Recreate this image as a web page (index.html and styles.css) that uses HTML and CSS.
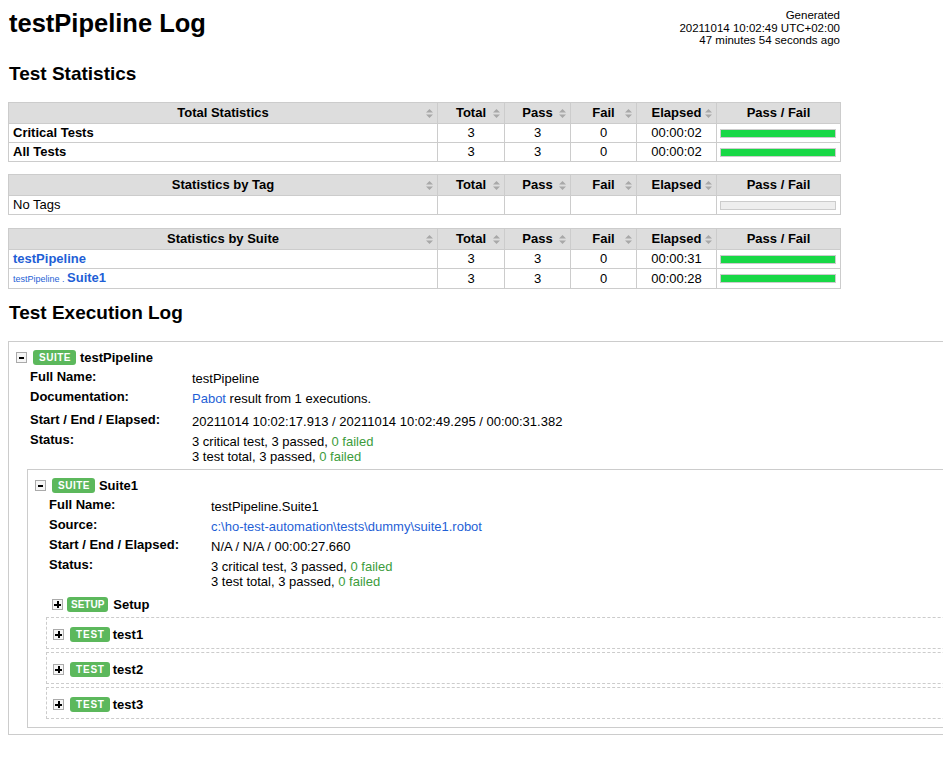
FILE: index.html
```html
<!DOCTYPE html>
<html>
<head>
<meta charset="utf-8">
<title>testPipeline Log</title>
<link rel="stylesheet" href="styles.css">
</head>
<body>
<header class="top">
  <h1 class="title">testPipeline Log</h1>
  <div class="generated">Generated<br>20211014 10:02:49 UTC+02:00<br>47 minutes 54 seconds ago</div>
</header>

<h2 class="section">Test Statistics</h2>

<table class="stats first">
  <colgroup><col class="c-name"><col class="c-num"><col class="c-num2"><col class="c-num2"><col class="c-el"><col class="c-bar"></colgroup>
  <thead>
    <tr>
      <th>Total Statistics<svg class="sorter" width="7" height="9" viewBox="0 0 7 9"><path d="M0 3.5 3.5 0 7 3.5Z M0 5.5 3.5 9 7 5.5Z"/></svg></th>
      <th>Total<svg class="sorter" width="7" height="9" viewBox="0 0 7 9"><path d="M0 3.5 3.5 0 7 3.5Z M0 5.5 3.5 9 7 5.5Z"/></svg></th>
      <th>Pass<svg class="sorter" width="7" height="9" viewBox="0 0 7 9"><path d="M0 3.5 3.5 0 7 3.5Z M0 5.5 3.5 9 7 5.5Z"/></svg></th>
      <th>Fail<svg class="sorter" width="7" height="9" viewBox="0 0 7 9"><path d="M0 3.5 3.5 0 7 3.5Z M0 5.5 3.5 9 7 5.5Z"/></svg></th>
      <th>Elapsed<svg class="sorter" width="7" height="9" viewBox="0 0 7 9"><path d="M0 3.5 3.5 0 7 3.5Z M0 5.5 3.5 9 7 5.5Z"/></svg></th>
      <th>Pass / Fail</th>
    </tr>
  </thead>
  <tbody>
    <tr><td class="stat-name strong">Critical Tests</td><td>3</td><td>3</td><td>0</td><td>00:00:02</td><td class="bar-cell"><div class="bar"><div class="bar-pass" style="width:100%"></div></div></td></tr>
    <tr><td class="stat-name strong">All Tests</td><td>3</td><td>3</td><td>0</td><td>00:00:02</td><td class="bar-cell"><div class="bar"><div class="bar-pass" style="width:100%"></div></div></td></tr>
  </tbody>
</table>

<table class="stats">
  <colgroup><col class="c-name"><col class="c-num"><col class="c-num2"><col class="c-num2"><col class="c-el"><col class="c-bar"></colgroup>
  <thead>
    <tr>
      <th>Statistics by Tag<svg class="sorter" width="7" height="9" viewBox="0 0 7 9"><path d="M0 3.5 3.5 0 7 3.5Z M0 5.5 3.5 9 7 5.5Z"/></svg></th>
      <th>Total<svg class="sorter" width="7" height="9" viewBox="0 0 7 9"><path d="M0 3.5 3.5 0 7 3.5Z M0 5.5 3.5 9 7 5.5Z"/></svg></th>
      <th>Pass<svg class="sorter" width="7" height="9" viewBox="0 0 7 9"><path d="M0 3.5 3.5 0 7 3.5Z M0 5.5 3.5 9 7 5.5Z"/></svg></th>
      <th>Fail<svg class="sorter" width="7" height="9" viewBox="0 0 7 9"><path d="M0 3.5 3.5 0 7 3.5Z M0 5.5 3.5 9 7 5.5Z"/></svg></th>
      <th>Elapsed<svg class="sorter" width="7" height="9" viewBox="0 0 7 9"><path d="M0 3.5 3.5 0 7 3.5Z M0 5.5 3.5 9 7 5.5Z"/></svg></th>
      <th>Pass / Fail</th>
    </tr>
  </thead>
  <tbody>
    <tr><td class="stat-name">No Tags</td><td></td><td></td><td></td><td></td><td class="bar-cell"><div class="bar"></div></td></tr>
  </tbody>
</table>

<table class="stats">
  <colgroup><col class="c-name"><col class="c-num"><col class="c-num2"><col class="c-num2"><col class="c-el"><col class="c-bar"></colgroup>
  <thead>
    <tr>
      <th>Statistics by Suite<svg class="sorter" width="7" height="9" viewBox="0 0 7 9"><path d="M0 3.5 3.5 0 7 3.5Z M0 5.5 3.5 9 7 5.5Z"/></svg></th>
      <th>Total<svg class="sorter" width="7" height="9" viewBox="0 0 7 9"><path d="M0 3.5 3.5 0 7 3.5Z M0 5.5 3.5 9 7 5.5Z"/></svg></th>
      <th>Pass<svg class="sorter" width="7" height="9" viewBox="0 0 7 9"><path d="M0 3.5 3.5 0 7 3.5Z M0 5.5 3.5 9 7 5.5Z"/></svg></th>
      <th>Fail<svg class="sorter" width="7" height="9" viewBox="0 0 7 9"><path d="M0 3.5 3.5 0 7 3.5Z M0 5.5 3.5 9 7 5.5Z"/></svg></th>
      <th>Elapsed<svg class="sorter" width="7" height="9" viewBox="0 0 7 9"><path d="M0 3.5 3.5 0 7 3.5Z M0 5.5 3.5 9 7 5.5Z"/></svg></th>
      <th>Pass / Fail</th>
    </tr>
  </thead>
  <tbody>
    <tr><td class="stat-name"><a class="suite-link" href="#s1">testPipeline</a></td><td>3</td><td>3</td><td>0</td><td>00:00:31</td><td class="bar-cell"><div class="bar"><div class="bar-pass" style="width:100%"></div></div></td></tr>
    <tr><td class="stat-name"><span class="parent-name">testPipeline . </span><a class="suite-link" href="#s1-s1">Suite1</a></td><td>3</td><td>3</td><td>0</td><td>00:00:28</td><td class="bar-cell"><div class="bar"><div class="bar-pass" style="width:100%"></div></div></td></tr>
  </tbody>
</table>

<h2 class="section exec">Test Execution Log</h2>

<div class="log">
  <div class="suite outer" id="s1">
    <div class="element-header">
      <span class="toggle"><svg width="9" height="9" viewBox="0 0 9 9"><rect x="2" y="4" width="5" height="2"/></svg></span>
      <span class="badge badge-suite">SUITE</span>
      <span class="name">testPipeline</span>
    </div>
    <table class="meta">
      <tr><th>Full Name:</th><td>testPipeline</td></tr>
      <tr><th>Documentation:</th><td class="doc"><a href="#">Pabot</a> result from 1 executions.</td></tr>
      <tr><th>Start / End / Elapsed:</th><td>20211014 10:02:17.913 / 20211014 10:02:49.295 / 00:00:31.382</td></tr>
      <tr><th>Status:</th><td>3 critical test, 3 passed, <span class="pass">0 failed</span><br>3 test total, 3 passed, <span class="pass">0 failed</span></td></tr>
    </table>
    <div class="children">
      <div class="suite inner" id="s1-s1">
        <div class="element-header">
          <span class="toggle"><svg width="9" height="9" viewBox="0 0 9 9"><rect x="2" y="4" width="5" height="2"/></svg></span>
          <span class="badge badge-suite">SUITE</span>
          <span class="name">Suite1</span>
        </div>
        <table class="meta">
          <tr><th>Full Name:</th><td>testPipeline.Suite1</td></tr>
          <tr><th>Source:</th><td><a href="#">c:\ho-test-automation\tests\dummy\suite1.robot</a></td></tr>
          <tr><th>Start / End / Elapsed:</th><td>N/A / N/A / 00:00:27.660</td></tr>
          <tr><th>Status:</th><td>3 critical test, 3 passed, <span class="pass">0 failed</span><br>3 test total, 3 passed, <span class="pass">0 failed</span></td></tr>
        </table>
        <div class="children">
          <div class="kw">
            <span class="toggle"><svg width="9" height="9" viewBox="0 0 9 9"><rect x="1" y="4" width="7" height="2"/><rect x="4" y="1" width="2" height="7"/></svg></span>
            <span class="badge badge-setup">SETUP</span>
            <span class="name kw-name">Setup</span>
          </div>
          <div class="test">
            <span class="toggle"><svg width="9" height="9" viewBox="0 0 9 9"><rect x="1" y="4" width="7" height="2"/><rect x="4" y="1" width="2" height="7"/></svg></span>
            <span class="badge badge-test">TEST</span>
            <span class="name test-name">test1</span>
          </div>
          <div class="test">
            <span class="toggle"><svg width="9" height="9" viewBox="0 0 9 9"><rect x="1" y="4" width="7" height="2"/><rect x="4" y="1" width="2" height="7"/></svg></span>
            <span class="badge badge-test">TEST</span>
            <span class="name test-name">test2</span>
          </div>
          <div class="test">
            <span class="toggle"><svg width="9" height="9" viewBox="0 0 9 9"><rect x="1" y="4" width="7" height="2"/><rect x="4" y="1" width="2" height="7"/></svg></span>
            <span class="badge badge-test">TEST</span>
            <span class="name test-name">test3</span>
          </div>
        </div>
      </div>
    </div>
  </div>
</div>
</body>
</html>
```

FILE: styles.css
```css
html {
  overflow-x: hidden;
}

body {
  margin: 0;
  padding: 0 0 0 8px;
  background: #fff;
  color: #000;
  font-family: "Liberation Sans", Arial, Helvetica, sans-serif;
  font-size: 13px;
}

a {
  color: #1f5fd6;
  text-decoration: none;
}

/* Header */
.top {
  display: flex;
  justify-content: space-between;
  align-items: flex-start;
  width: 832px;
}

.title {
  margin: 8px 0 0 1px;
  font-size: 25.5px;
  line-height: 30px;
  font-weight: bold;
}

.generated {
  margin-top: 9px;
  text-align: right;
  font-size: 11.5px;
  line-height: 12.5px;
}

.section {
  margin: 16.5px 0 17px 1px;
  font-size: 19px;
  line-height: 22px;
  font-weight: bold;
}

.section.exec {
  margin: 13px 0 17px 1px;
}

/* Statistics tables */
.stats {
  width: 832px;
  border-collapse: collapse;
  table-layout: fixed;
  margin-bottom: 13px;
}

.stats.first {
  margin-bottom: 12px;
}

.c-name { width: 429px; }
.c-num { width: 67px; }
.c-num2 { width: 66px; }
.c-el { width: 80px; }
.c-bar { width: 124px; }

.stats th,
.stats td {
  border: 1px solid #ccc;
}

.stats th {
  position: relative;
  background: #ddd;
  font-weight: bold;
  text-align: center;
  padding: 2px 4px;
  line-height: 16px;
}

.stats td {
  padding: 1px 4px;
  line-height: 16px;
  text-align: center;
}

.stats td.stat-name {
  text-align: left;
}

.stats td.strong {
  font-weight: bold;
}

.sorter {
  position: absolute;
  right: 4px;
  top: 6px;
  fill: #a8a8a8;
}

.suite-link {
  font-weight: bold;
}

.parent-name {
  font-size: 9px;
  color: #1f5fd6;
}

.stats td.bar-cell {
  padding: 0 4px 0 3px;
}

.bar {
  height: 7px;
  border: 1px solid #ccc;
  background: #eee;
}

.bar-pass {
  height: 100%;
  background: #18d846;
}

/* Execution log */
.log {
  width: 1100px;
}

.suite {
  border: 1px solid #ccc;
  background: #fff;
  padding: 8px 0 6px 7px;
}

.suite.inner {
  padding-bottom: 8px;
}

.element-header {
  display: flex;
  align-items: center;
  height: 15px;
}

.toggle {
  display: flex;
  width: 9px;
  height: 9px;
  border: 1px solid #aaa;
  background: #f6f6f6;
  fill: #000;
  flex: none;
}

.badge {
  flex: none;
  height: 15px;
  line-height: 15px;
  border-radius: 3px;
  background: #5cb85c;
  color: #fff;
  font-size: 10px;
  font-weight: bold;
  text-transform: uppercase;
}

.badge-suite {
  margin-left: 6px;
  padding: 0 5px 0 6px;
  letter-spacing: 0.5px;
}

.badge-setup {
  margin-left: 4px;
  padding: 0 4px;
  letter-spacing: 0;
}

.badge-test {
  margin-left: 6px;
  padding: 0 5px 0 6px;
  letter-spacing: 0.8px;
}

.name {
  margin-left: 4px;
  font-weight: bold;
}

.kw-name {
  margin-left: 5px;
}

.test-name {
  margin-left: 3px;
}

.meta {
  margin: 2px 0 0 14px;
  border-collapse: collapse;
}

.meta th {
  width: 162px;
  padding: 2px 0 3px;
  text-align: left;
  vertical-align: top;
  font-weight: bold;
  line-height: 15px;
}

.meta td {
  padding: 4px 0 1px;
  line-height: 15px;
  vertical-align: top;
}

.meta td.doc {
  padding-bottom: 4px;
}

.pass {
  color: #3c9c3c;
}

.children {
  margin: 4px 0 0 11px;
}

.suite.inner .children {
  margin-top: 4px;
}

.kw {
  display: flex;
  align-items: center;
  height: 20px;
  padding-left: 6px;
}

.test {
  display: flex;
  align-items: center;
  box-sizing: border-box;
  height: 32px;
  margin-top: 3px;
  padding: 2px 0 0 6px;
  border: 1px dashed #ccc;
}
```
